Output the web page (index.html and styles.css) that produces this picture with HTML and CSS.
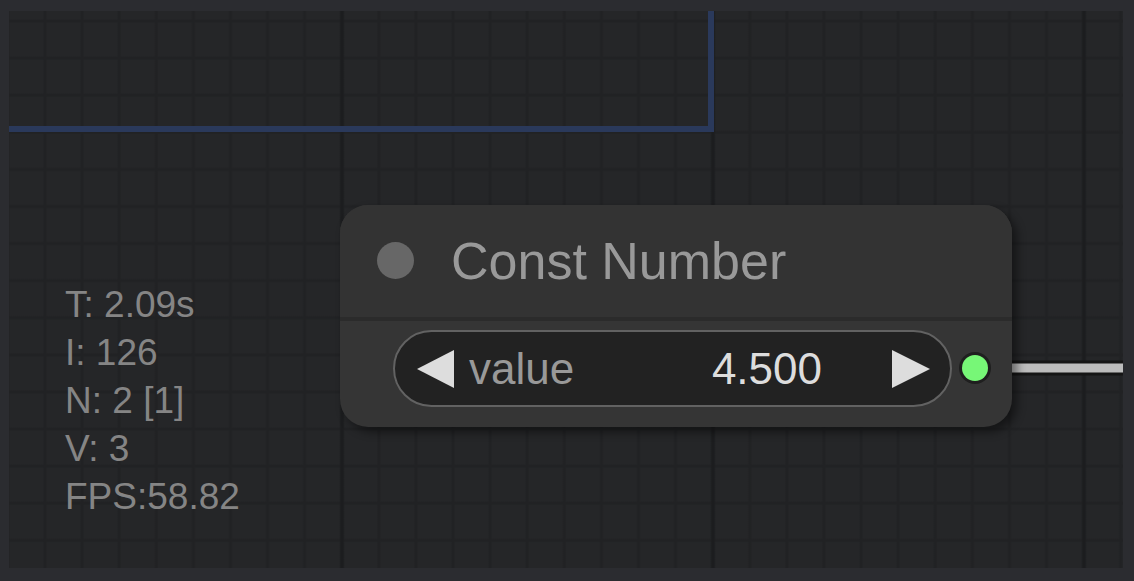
FILE: index.html
```html
<!DOCTYPE html>
<html>
<head>
<meta charset="utf-8">
<link rel="stylesheet" href="styles.css">
</head>
<body>
<div class="canvas">
  <svg class="links" width="1114" height="557" viewBox="0 0 1114 557">
    <path d="M0 118 H702 V0" fill="none" stroke="#2a395b" stroke-width="6"/>
    <path d="M966 357 H1114" fill="none" stroke="#151515" stroke-width="15"/>
    <path d="M966 357 H1114" fill="none" stroke="#bcbcbc" stroke-width="9"/>
  </svg>
  <div class="info">
    <div>T: 2.09s</div>
    <div>I: 126</div>
    <div>N: 2 [1]</div>
    <div>V: 3</div>
    <div>FPS:58.82</div>
  </div>
  <div class="node">
    <div class="node-title">
      <span class="title-dot"></span>
      <span class="title-text">Const Number</span>
    </div>
    <div class="node-body">
      <div class="widget">
        <span class="arrow arrow-left"></span>
        <span class="w-label">value</span>
        <span class="w-value">4.500</span>
        <span class="arrow arrow-right"></span>
      </div>
      <span class="slot"></span>
    </div>
  </div>
</div>
</body>
</html>
```
FILE: styles.css
```css
html, body {
  margin: 0;
  padding: 0;
}
body {
  background: #2b2c30;
  padding: 11px 11px 13px 9px;
  font-family: "Liberation Sans", Arial, sans-serif;
}
.canvas {
  position: relative;
  width: 1114px;
  height: 557px;
  overflow: hidden;
  background-color: #252628;
  background-image:
    linear-gradient(to right, transparent 0, #1c1d1f 1.5px, #1c1d1f 3.5px, transparent 5px),
    linear-gradient(to right, transparent 0, #212224 1px, #212224 3px, transparent 4px),
    linear-gradient(to bottom, transparent 0, #212224 1px, #212224 3px, transparent 4px);
  background-size: 371px 100%, 37.1px 100%, 100% 37.1px;
  background-position: 330.5px 0, 34px 0, 0 8px;
}
.links {
  position: absolute;
  left: 0;
  top: 0;
  filter: blur(0.6px);
}
.info {
  position: absolute;
  left: 56px;
  top: 270px;
  font-size: 37px;
  line-height: 48px;
  color: #858585;
  white-space: nowrap;
}
.node {
  position: absolute;
  left: 331px;
  top: 194px;
  width: 672px;
  height: 222px;
  border-radius: 28px;
  background: #353535;
  box-shadow: 5px 5px 10px rgba(0, 0, 0, 0.45);
  overflow: hidden;
  display: flex;
  flex-direction: column;
}
.node-title {
  height: 112px;
  background: #333333;
  border-bottom: 4px solid #2b2b2b;
  display: flex;
  align-items: center;
  padding-left: 37px;
}
.title-dot {
  width: 37px;
  height: 37px;
  border-radius: 50%;
  background: #676767;
  margin-right: 38px;
  margin-top: -2px;
}
.title-text {
  font-size: 52px;
  color: #999999;
  margin-left: -1px;
}
.node-body {
  flex: 1;
  display: flex;
  align-items: flex-start;
  padding-top: 9px;
  padding-left: 53px;
}
.widget {
  box-sizing: border-box;
  width: 559px;
  height: 77px;
  border: 2px solid #626262;
  border-radius: 39px;
  background: #222222;
  display: flex;
  align-items: center;
  padding-left: 22px;
  padding-right: 20px;
}
.arrow {
  width: 0;
  height: 0;
  border-top: 19px solid transparent;
  border-bottom: 19px solid transparent;
}
.arrow-left {
  border-right: 37px solid #dddddd;
}
.arrow-right {
  border-left: 38px solid #dddddd;
}
.w-label {
  font-size: 44px;
  color: #999999;
  margin-left: 15px;
  flex: 1;
}
.w-value {
  font-size: 44px;
  color: #dddddd;
  margin-right: 70px;
}
.slot {
  width: 26px;
  height: 26px;
  border-radius: 50%;
  background: #77f777;
  box-shadow: 0 0 0 3px #1f1f1f;
  margin-left: 10px;
  margin-top: 25px;
}
```
